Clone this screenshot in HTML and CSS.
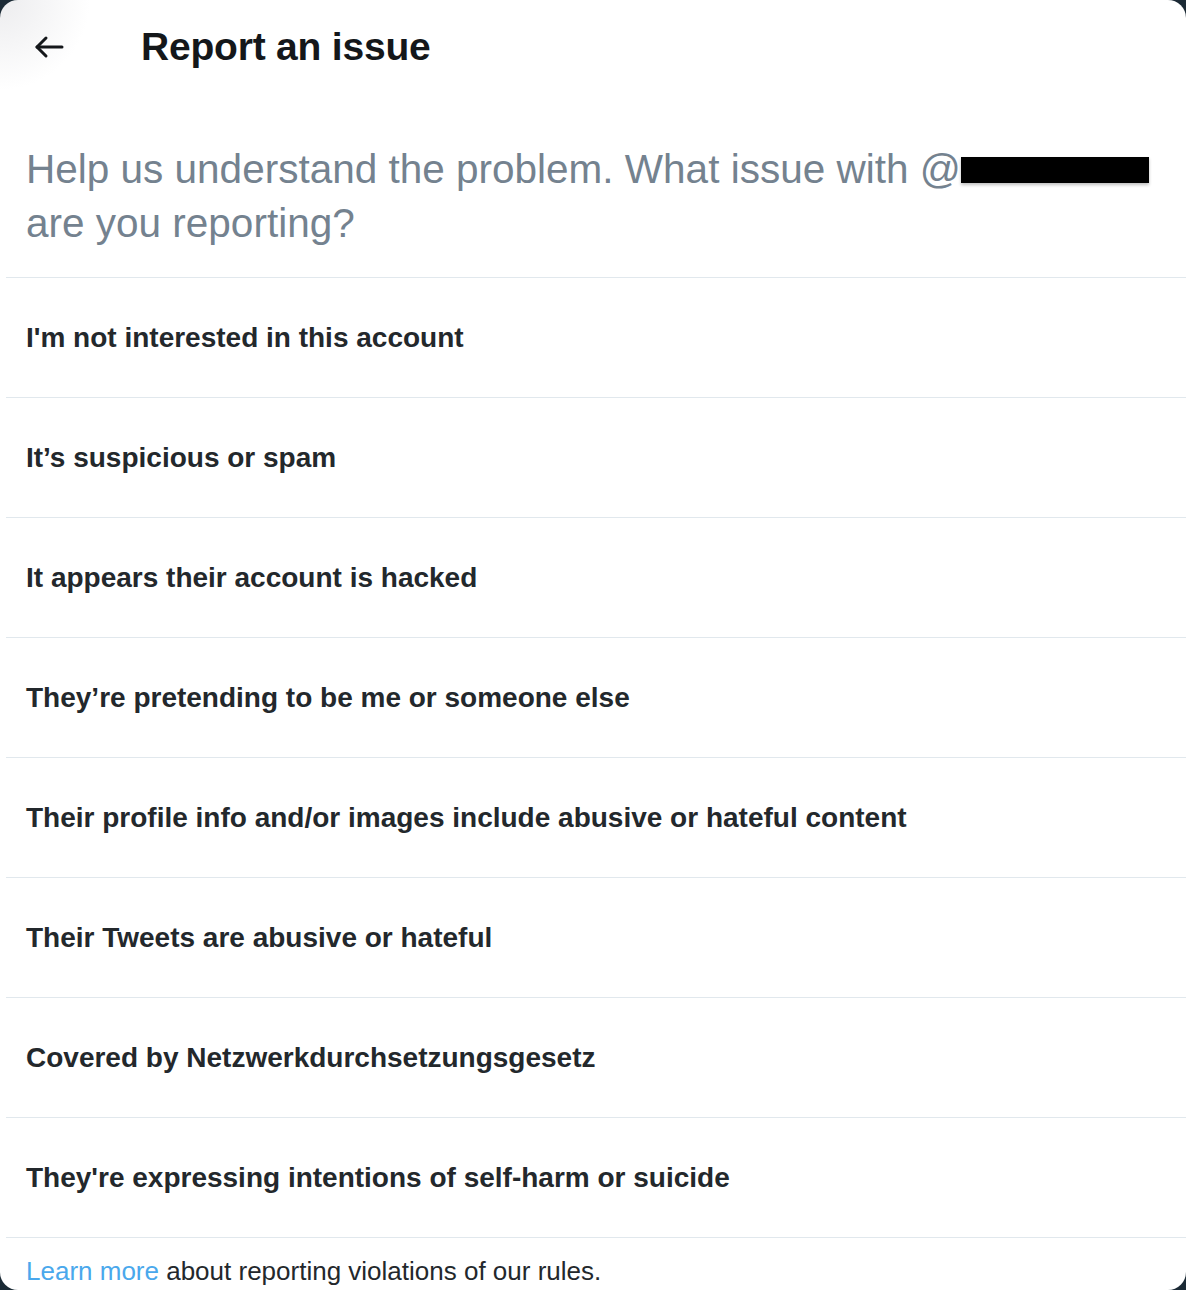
FILE: index.html
```html
<!DOCTYPE html>
<html lang="en">
<head>
<meta charset="utf-8">
<title>Report an issue</title>
<link rel="stylesheet" href="styles.css">
</head>
<body>
<div class="modal">
  <header class="header">
    <button class="back" aria-label="Back">
      <svg width="30" height="24" viewBox="0 0 30 24" fill="none" stroke="#14171a" stroke-width="3" stroke-linecap="round" stroke-linejoin="round">
        <path d="M28 12H3"/>
        <path d="M12 3L3 12l9 9"/>
      </svg>
    </button>
    <h1 class="title">Report an issue</h1>
  </header>
  <p class="question"><span class="nowrap">Help us understand the problem. What issue with @<span class="redact"></span></span> are you reporting?</p>
  <ul class="options">
    <li class="option">I'm not interested in this account</li>
    <li class="option">It’s suspicious or spam</li>
    <li class="option">It appears their account is hacked</li>
    <li class="option">They’re pretending to be me or someone else</li>
    <li class="option">Their profile info and/or images include abusive or hateful content</li>
    <li class="option">Their Tweets are abusive or hateful</li>
    <li class="option">Covered by Netzwerkdurchsetzungsgesetz</li>
    <li class="option">They're expressing intentions of self-harm or suicide</li>
  </ul>
  <p class="footer"><a class="link" href="#">Learn more</a> about reporting violations of our rules.</p>
</div>
</body>
</html>
```

FILE: styles.css
```css
html, body {
  margin: 0;
  padding: 0;
  background: #1b2a35;
}
body {
  font-family: "Liberation Sans", Arial, sans-serif;
  width: 1186px;
  height: 1290px;
  overflow: hidden;
}
.modal {
  background: #fff;
  width: 1186px;
  height: 1290px;
  border-radius: 18px;
  overflow: hidden;
  background-image: radial-gradient(circle at 0 0, #ececee 0, #fff 90px), radial-gradient(circle at 100% 0, #f3f3f4 0, rgba(255,255,255,0) 90px);
}
.header {
  display: flex;
  align-items: center;
  height: 94px;
}
.back {
  border: 0;
  background: none;
  padding: 0;
  margin-left: 34px;
  width: 30px;
  height: 24px;
  display: flex;
}
.title {
  margin: 0 0 0 77px;
  font-size: 39px;
  font-weight: 700;
  color: #14171a;
  letter-spacing: -0.2px;
}
.question {
  margin: 48px 0 0 6px;
  padding: 0 10px 27px 20px;
  font-size: 40.5px;
  line-height: 54px;
  color: #74828f;
  border-bottom: 1px solid #e1e8ed;
}
.nowrap {
  white-space: nowrap;
}
.redact {
  display: inline-block;
  background: #000;
  width: 188px;
  height: 26px;
  margin-left: 0;
  vertical-align: 0;
  box-shadow: 0 2px 3px rgba(0,0,0,0.25);
}
.options {
  list-style: none;
  margin: 0 0 0 6px;
  padding: 0;
}
.option {
  height: 119px;
  display: flex;
  align-items: center;
  padding-left: 20px;
  font-size: 28px;
  font-weight: 700;
  color: #23282c;
  border-bottom: 1px solid #e1e8ed;
}
.footer {
  margin: 0;
  padding: 18px 0 0 26px;
  font-size: 26px;
  color: #23282c;
}
.link {
  color: #4aa8ec;
  text-decoration: none;
}
```
